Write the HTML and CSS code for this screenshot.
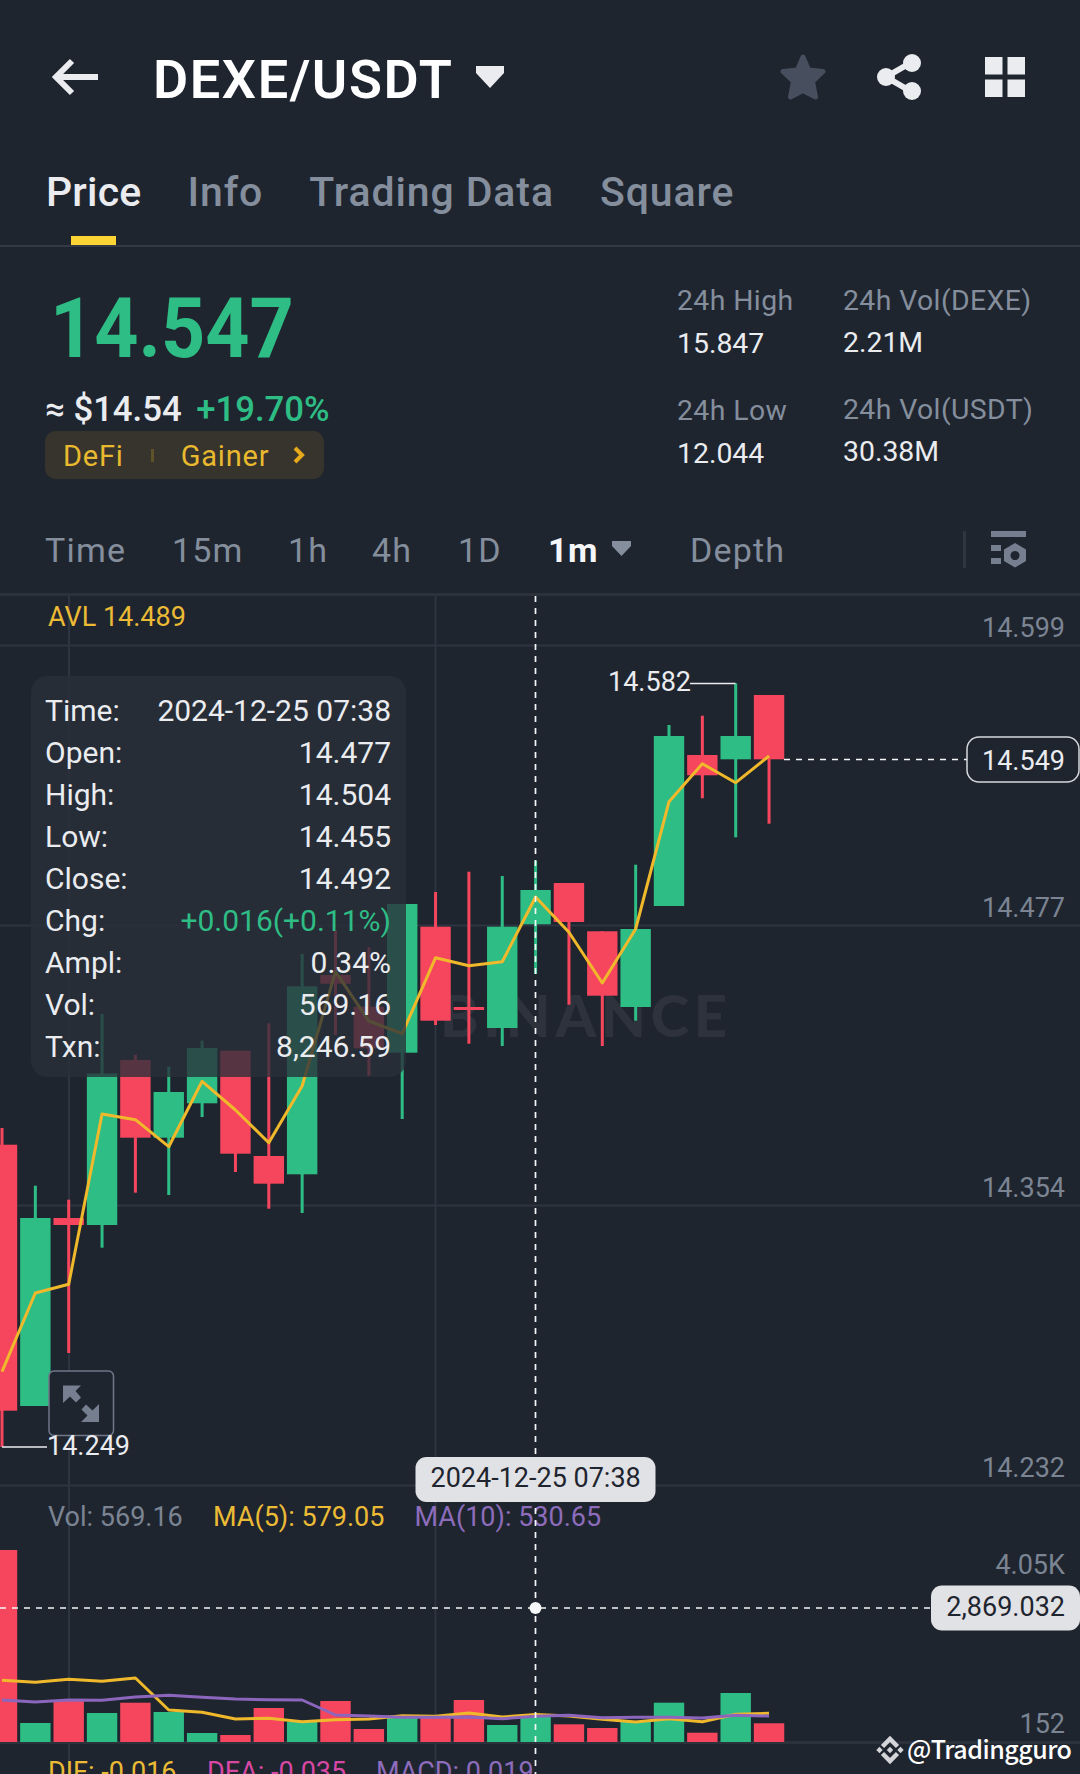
FILE: index.html
```
<!DOCTYPE html>
<html lang="en">
<head>
    <meta charset="UTF-8">
    <title>DEXE/USDT</title>
    <link rel="stylesheet" href="styles.css">
</head>
<body>
<header class="header">
    <svg class="back" width="46" height="38" viewBox="0 0 46 38">
        <path d="M20 3 L4 19 L20 35 M4 19 H46" fill="none" stroke="#eaecef" stroke-width="6"/>
    </svg>
    <h1>DEXE/USDT</h1>
    <svg class="caret" width="28" height="22" viewBox="0 0 28 22">
        <path d="M0 0 H28 V7 L14 22 L0 7 Z" fill="#eaecef"/>
    </svg>
    <div class="actions">
        <svg width="46" height="46" viewBox="0 0 46 46">
            <path d="M23 3 L28.5 16 L43 17.5 L32.500 27.500 L35.500 43 L23 36.500 L10.500 43 L13.500 27.500 L3 17.500 L17.500 16 Z" fill="#474f5e" stroke="#474f5e" stroke-width="5" stroke-linejoin="round"/>
        </svg>
        <svg width="44" height="48" viewBox="0 0 44 48">
            <path d="M35 9 L9 24 L35 39" fill="none" stroke="#eaecef" stroke-width="6"/>
            <circle cx="35" cy="10" r="9" fill="#eaecef"/>
            <circle cx="9" cy="24" r="9" fill="#eaecef"/>
            <circle cx="35" cy="38" r="9" fill="#eaecef"/>
        </svg>
        <svg width="40" height="40" viewBox="0 0 40 40">
            <path d="M0 0h17.500v17.500h-17.500z M22.500 0h17.500v17.500h-17.500z M0 22.500h17.500v17.500h-17.500z M22.500 22.500h17.500v17.500h-17.500z" fill="#eaecef"/>
        </svg>
    </div>
</header>
<nav class="tabs">
    <a class="active">Price</a>
    <a>Info</a>
    <a>Trading Data</a>
    <a>Square</a>
</nav>
<section class="summary">
    <div class="quote">
        <div class="price"><span>14.547</span></div>
        <div class="fiat">≈ $14.54 <span class="up">+19.70%</span></div>
        <div class="tag">
            <span>DeFi</span>
            <i class="sep"></i>
            <span>Gainer</span>
            <svg width="12" height="18" viewBox="0 0 12 18">
                <path d="M2 2 L9 9 L2 16" fill="none" stroke="#e5a91b" stroke-width="4"/>
            </svg>
        </div>
    </div>
    <dl class="stats">
        <dt>24h High</dt><dd>15.847</dd>
        <dt>24h Low</dt><dd>12.044</dd>
    </dl>
    <dl class="stats volumes">
        <dt>24h Vol(DEXE)</dt><dd>2.21M</dd>
        <dt>24h Vol(USDT)</dt><dd>30.38M</dd>
    </dl>
</section>
<div class="intervals">
    <span>Time</span>
    <span>15m</span>
    <span>1h</span>
    <span>4h</span>
    <span>1D</span>
    <span class="selected">1m
        <svg width="19" height="15" viewBox="0 0 19 15"><path d="M0 0 H19 V5 L9.500 15 L0 5 Z" fill="#848e9c"/></svg>
    </span>
    <span>Depth</span>
    <svg class="settings" width="36" height="37" viewBox="0 0 36 37">
        <path d="M0 0h35v6h-35z M0 14h10v6h-10z M0 27h10v6h-10z" fill="#767f90"/>
        <path d="M24 12 L35 18.500 V30 L24 36.500 L13 30 V18.500 Z M24 20 a4.500 4.500 0 1 0 .01 0 Z" fill="#767f90" fill-rule="evenodd"/>
    </svg>
</div>
<main class="chart">
    <svg id="plot" width="1080" height="1181" viewBox="0 593 1080 1181">
        <path class="grid" d="M0 645.500H1080 M0 925.500H1080 M0 1205.500H1080 M0 1485.500H1080 M69 596V1774 M435.500 596V1774"/>
        <path class="border" d="M0 594.500H1080 M0 1742.500H1080"/>
        <text class="watermark" x="440" y="1036.500" textLength="287">BINANCE</text>
        <g id="candles"></g>
        <g id="volumes"></g>
        <polyline id="avl" class="line yellow-line"/>
        <polyline id="ma5" class="line yellow-line"/>
        <polyline id="ma10" class="line purple-line"/>

        <path class="marker" d="M690 683.500H735.500 M2 1447H47"/>
        <text class="light" x="608" y="691">14.582</text>
        <rect x="49" y="1371" width="64.500" height="64.500" rx="5" fill="#1f252f" stroke="#6f7788" stroke-width="1.500"/>
        <path d="M63 1385.500H81L75.500 1391L81 1397.500L76 1402.500L70 1396.500L63 1403Z M99 1422H81L87.500 1415.500L81.500 1409.500L86 1404.500L92.500 1410.500L99 1404Z" fill="#767f90"/>
        <text class="light" x="47" y="1455">14.249</text>

        <text class="yellow" x="48" y="625.500">AVL 14.489</text>
        <g class="axis">
            <text x="1065" y="637">14.599</text>
            <text x="1065" y="917">14.477</text>
            <text x="1065" y="1197">14.354</text>
            <text x="1065" y="1477">14.232</text>
            <text x="1065" y="1574">4.05K</text>
            <text x="1065" y="1732.500">152</text>
        </g>
        <text class="gray" x="48" y="1526">Vol: 569.16</text>
        <text class="yellow" x="213" y="1526">MA(5): 579.05</text>
        <text class="purple" x="414.500" y="1526">MA(10): 530.65</text>
        <text class="yellow" x="48" y="1781">DIF: -0.016</text>
        <text class="pink" x="207" y="1781">DEA: -0.035</text>
        <text class="purple" x="376" y="1781">MACD: 0.019</text>

        <path class="dashes" d="M784 759.500H967"/>
        <path class="dashes" d="M535.500 596V1774"/>
        <path class="dashes" d="M0 1608H932"/>
        <circle cx="535.500" cy="1608" r="6" fill="#f5f6f8"/>
        <rect x="967" y="737" width="112" height="45" rx="12" fill="#1f252f" stroke="#d5d8de" stroke-width="1.500"/>
        <text class="light end" x="1065" y="770">14.549</text>
        <rect class="pill" x="415.500" y="1457" width="240" height="45" rx="11"/>
        <text class="dark" x="430.500" y="1486.500">2024-12-25 07:38</text>
        <rect class="pill" x="931" y="1585.500" width="149" height="45" rx="11"/>
        <text class="dark end" x="1065" y="1615.500">2,869.032</text>

        <path d="M882.500 1746.500 L890 1739 L897.500 1746.500 M882.500 1753.500 L890 1761 L897.500 1753.500" fill="none" stroke="#d4d5d8" stroke-width="4.500"/>
        <path d="M890 1746.800l3.200 3.200-3.200 3.200-3.200-3.200z M879.500 1746.800l3.200 3.200-3.200 3.200-3.200-3.200z M900.500 1746.800l3.200 3.200-3.200 3.200-3.200-3.200z" fill="#d4d5d8"/>
        <text class="author" x="907" y="1758.500" textLength="165">@Tradingguro</text>
    </svg>
    <dl class="tooltip">
        <dt>Time:</dt><dd>2024-12-25 07:38</dd>
        <dt>Open:</dt><dd>14.477</dd>
        <dt>High:</dt><dd>14.504</dd>
        <dt>Low:</dt><dd>14.455</dd>
        <dt>Close:</dt><dd>14.492</dd>
        <dt>Chg:</dt><dd class="up">+0.016(+0.11%)</dd>
        <dt>Ampl:</dt><dd>0.34%</dd>
        <dt>Vol:</dt><dd>569.16</dd>
        <dt>Txn:</dt><dd>8,246.59</dd>
    </dl>
</main>
<script src="chart.js"></script>
</body>
</html>
```
FILE: styles.css
```
* {
    box-sizing: border-box;
}
body {
    margin: 0;
    width: 1080px;
    height: 1774px;
    overflow: hidden;
    background-color: #1f252f;
    color: #eaecef;
    font-family: Roboto, "Liberation Sans", sans-serif;
}
dl, dd, h1 {
    margin: 0;
}
.up {
    color: #2ebd85;
}
.header {
    display: flex;
    align-items: center;
    height: 154px;
    padding: 0 55px 0 52px;
}
.header h1 {
    margin-left: 55px;
    padding-top: 5px;
    color: #fff;
    font-size: 54px;
    font-weight: 600;
    letter-spacing: 1.6px;
    line-height: 64px;
}
.caret {
    margin-left: 22px;
}
.actions {
    display: flex;
    align-items: center;
    margin-left: auto;
}
.actions svg:nth-child(2) {
    margin: 0 64px 0 51px;
}
.tabs {
    display: flex;
    gap: 46px;
    height: 93px;
    padding-left: 46px;
    border-bottom: 2px solid #333a45;
    color: #848e9c;
    font-size: 41px;
    font-weight: 500;
    letter-spacing: 0.9px;
    line-height: 77px;
}
.tabs a {
    position: relative;
}
.tabs .active {
    color: #eaecef;
    letter-spacing: 0.2px;
}
.tabs .active::after {
    content: "";
    position: absolute;
    left: 25px;
    bottom: 0;
    width: 45px;
    height: 9px;
    background-color: #fcd535;
}
.summary {
    display: flex;
    height: 261px;
    padding: 32px 0 0 45px;
}
.quote {
    width: 632px;
}
.price {
    padding-left: 5px;
    color: #2ebd85;
    font-size: 83px;
    font-weight: 700;
    line-height: 100px;
}
.price span {
    display: inline-block;
    transform: scaleX(0.93);
    transform-origin: left;
}
.fiat {
    padding-top: 9px;
    font-size: 34.7px;
    font-weight: 500;
    line-height: 43px;
}
.fiat .up {
    margin-left: 6px;
}
.tag {
    display: flex;
    align-items: center;
    width: 279px;
    height: 48px;
    padding-left: 18px;
    border-radius: 11px;
    background-color: #36342d;
    color: #e9b92f;
    font-size: 29px;
    letter-spacing: 0.8px;
    line-height: 36px;
}
.tag span {
    padding-top: 1px;
}
.sep {
    width: 3px;
    height: 13px;
    margin: 0 27px;
    background-color: #5f5228;
}
.tag svg {
    margin-left: 24px;
}
.stats {
    width: 166px;
    font-size: 28.4px;
    line-height: 43px;
    white-space: nowrap;
}
.stats dt {
    color: #848e9c;
    letter-spacing: 0.4px;
}
.stats dd {
    margin-bottom: 24px;
}
.volumes {
    padding-top: 1px;
    line-height: 42px;
}
.volumes dd {
    margin-bottom: 25px;
}
.intervals {
    display: grid;
    grid-template-columns: 127px 116px 84px 86px 90px 142px 273px auto;
    align-items: center;
    height: 83px;
    margin-bottom: 2px;
    padding-left: 45px;
    color: #848e9c;
    font-size: 34px;
    letter-spacing: 1.2px;
}
.selected {
    color: #f5f6f8;
    font-weight: 700;
    letter-spacing: 0.5px;
}
.selected svg {
    margin: 0 0 9px 5px;
    vertical-align: middle;
}
.settings {
    box-sizing: content-box;
    padding-left: 25px;
    border-left: 3px solid #2f3641;
}
.chart {
    position: relative;
    height: 1181px;
}
#plot {
    display: block;
    font-size: 27px;
}
.grid {
    stroke: #2e3540;
    stroke-width: 2;
}
.border {
    stroke: #2b323c;
    stroke-width: 3;
}
.watermark {
    fill: #2d323d;
    font-family: Lato, sans-serif;
    font-size: 58px;
    font-weight: 900;
}
.rise {
    fill: #2ebd85;
}
.fall {
    fill: #f6465d;
}
.line {
    fill: none;
    stroke-width: 3;
    stroke-linejoin: round;
}
.yellow-line {
    stroke: #f0b92b;
}
.purple-line {
    stroke: #8c66bd;
}
.marker {
    stroke: #eaecef;
    stroke-width: 1.5;
}
.dashes {
    stroke: #f5f6f8;
    stroke-width: 1.7;
    stroke-dasharray: 6 6;
}
.light {
    fill: #eaecef;
}
.gray {
    fill: #7b8492;
}
.yellow {
    fill: #ecbb35;
}
.purple {
    fill: #8c6cbb;
}
.pink {
    fill: #d748a5;
}
.dark {
    fill: #1f252f;
}
.pill {
    fill: #e1e2e6;
}
.axis {
    fill: #7b8492;
    text-anchor: end;
}
.end {
    text-anchor: end;
}
.author {
    fill: #fff;
    font-family: "Noto Sans CJK SC", "Noto Sans", sans-serif;
    font-size: 25px;
    font-weight: 500;
}
.tooltip {
    position: absolute;
    left: 31px;
    top: 83px;
    display: grid;
    grid-template-columns: auto auto;
    width: 375px;
    height: 401px;
    padding: 14px 15px 0 14px;
    border-radius: 16px;
    background-color: rgba(41, 47, 58, 0.78);
    font-size: 30px;
    line-height: 42px;
    align-content: start;
}
.tooltip dd {
    text-align: right;
}
```
FILE: chart.js
```
const STEP = 33.35;
const VOLUME_BASE = 1742;

// [rise, high, body top, body bottom, low, volume top]
const bars = [
    [0, 1128, 1144.7, 1410.7, 1447, 1550],
    [1, 1185.7, 1218, 1406, 1406, 1723],
    [0, 1199.7, 1218, 1225, 1353, 1701],
    [1, 1014, 1073.5, 1225, 1247.7, 1713],
    [0, 1054.7, 1060, 1137.7, 1192.7, 1702.7],
    [1, 1066.7, 1092, 1137.7, 1195, 1712],
    [1, 1040.7, 1048, 1103.3, 1117, 1733],
    [0, 1050.7, 1050.7, 1153.7, 1172, 1735],
    [0, 1023.3, 1156, 1183.7, 1208.7, 1708],
    [1, 954, 986.3, 1174.3, 1213, 1722],
    [0, 930, 975, 983.7, 1035, 1701],
    [0, 947.3, 1006.7, 1048.3, 1075.7, 1729],
    [1, 904, 904, 1052.7, 1119, 1718],
    [0, 892, 926.7, 1020.7, 1025, 1718],
    [0, 871.7, 1007, 1010, 1043.7, 1700],
    [1, 876, 926.7, 1028, 1046, 1725],
    [1, 860.7, 890, 924.3, 974, 1717],
    [0, 883, 883, 922, 1004.7, 1724.3],
    [0, 931.3, 931.3, 995.7, 1046, 1728],
    [1, 864.7, 929, 1007, 1020.7, 1721.7],
    [1, 725, 736, 906, 906, 1702.7],
    [0, 715.7, 755, 775.3, 798.3, 1732.7],
    [1, 683.3, 736, 759.3, 837.3, 1693],
    [0, 695, 695, 759.3, 823.7, 1723.3]
];
const avl = [1371.7, 1293, 1284.3, 1114, 1119.7, 1146.7, 1081.3, 1110, 1142.7, 1086, 971.7, 1021, 1033.7, 957.7, 965.7, 961.7, 897, 932.3, 983, 929, 801.7, 763.7, 782.7, 756];
const ma5 = [1680.3, 1682.3, 1679.3, 1681.3, 1678, 1710, 1712.3, 1719, 1718.3, 1721.7, 1719.7, 1719, 1715.7, 1716.3, 1713, 1717, 1714.5, 1716, 1719.3, 1722, 1718.7, 1721.7, 1714.3, 1713.3];
const ma10 = [1700, 1702, 1700, 1700.3, 1697, 1695.3, 1697.3, 1699, 1699.7, 1700, 1715, 1716, 1717.3, 1717.3, 1717, 1718.7, 1716.3, 1715.3, 1717.7, 1717.3, 1717.3, 1718, 1715.3, 1716];

function centre(i) {
    return 2 + i * STEP;
}

function rect(type, x, y, width, height) {
    return `<rect class="${type}" x="${x}" y="${y}" width="${width}" height="${height}"/>`;
}

function drawLine(id, values) {
    const points = values.map((y, i) => centre(i) + ',' + y).join(' ');
    document.getElementById(id).setAttribute('points', points);
}

let candles = '';
let volumes = '';
bars.forEach(([rise, high, top, bottom, low, volume], i) => {
    const type = rise ? 'rise' : 'fall';
    const x = centre(i);
    candles += rect(type, x - 1.5, high, 3, low - high);
    candles += rect(type, x - 15.2, top, 30.4, bottom - top);
    volumes += rect(type, x - 15.2, volume, 30.4, VOLUME_BASE - volume);
});
document.getElementById('candles').innerHTML = candles;
document.getElementById('volumes').innerHTML = volumes;

drawLine('avl', avl);
drawLine('ma5', ma5);
drawLine('ma10', ma10);
```
